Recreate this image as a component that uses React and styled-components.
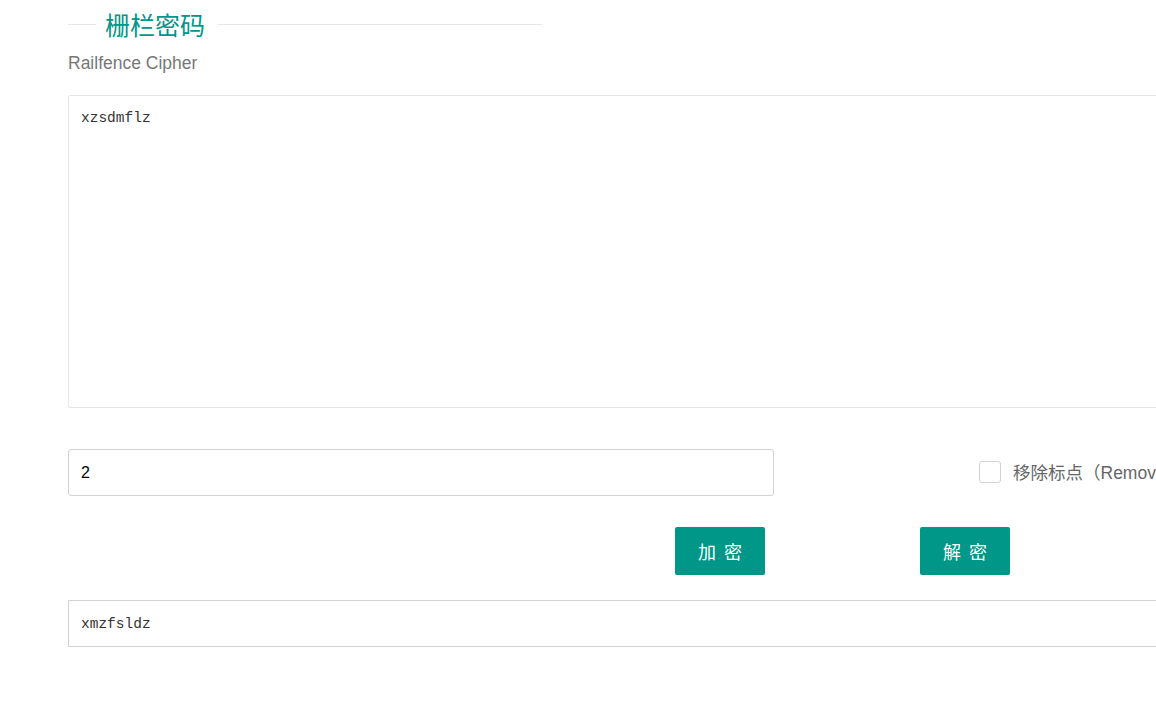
import React from "react";
import styled, { createGlobalStyle } from "styled-components";

const Global = createGlobalStyle`
  html, body { margin: 0; padding: 0; background: #fff; overflow: hidden; }
  body { font-family: "Liberation Sans", "Noto Sans CJK SC", Arial, sans-serif; color: #333; }
`;

const Page = styled.div`
  width: 1400px;
  padding: 8px 0 40px 68px;
  box-sizing: border-box;
`;

const TitleRow = styled.div`
  display: flex;
  align-items: center;
  width: 474px;
  height: 32px;
`;

const Rule = styled.div`
  height: 1px;
  background: #e6e6e6;
  flex: ${(p) => (p.$grow ? 1 : "none")};
  width: ${(p) => (p.$grow ? "auto" : `${p.$w}px`)};
`;

const Title = styled.h2`
  margin: 0;
  padding: 0 13px 0 9px;
  font-family: "Noto Sans CJK SC", "Liberation Sans", sans-serif;
  font-weight: 400;
  font-size: 25px;
  line-height: 32px;
  color: #009688;
`;

const Subtitle = styled.div`
  margin-top: 11px;
  font-size: 17.5px;
  line-height: 24px;
  color: #777;
`;

const TextArea = styled.textarea`
  display: block;
  margin-top: 20px;
  width: 1300px;
  height: 313px;
  box-sizing: border-box;
  border: 1px solid #e6e6e6;
  border-radius: 2px;
  padding: 12px 12px;
  font-family: "Liberation Mono", monospace;
  font-size: 14.5px;
  line-height: 20px;
  color: #333;
  resize: none;
  outline: none;
`;

const OptionRow = styled.div`
  display: flex;
  align-items: center;
  margin-top: 41px;
`;

const NumberInput = styled.input`
  width: 706px;
  height: 47px;
  box-sizing: border-box;
  border: 1px solid #d2d2d2;
  border-radius: 3px;
  padding: 0 12px;
  font-family: "Liberation Sans", Arial, sans-serif;
  font-size: 16px;
  color: #000;
  outline: none;
`;

const CheckLabel = styled.label`
  display: flex;
  align-items: center;
  gap: 12px;
  margin-left: 205px;
  margin-top: -2px;
  font-family: "Liberation Sans", "Noto Sans CJK SC", sans-serif;
  font-size: 17.5px;
  color: #666;
  white-space: nowrap;
`;

const Box = styled.span`
  width: 22px;
  height: 22px;
  box-sizing: border-box;
  border: 1px solid #d2d2d2;
  border-radius: 3px;
  background: #fff;
`;

const ButtonRow = styled.div`
  display: flex;
  gap: 155px;
  margin-top: 31px;
  padding-left: 607px;
`;

const Button = styled.button`
  width: 90px;
  height: 48px;
  border: none;
  border-radius: 2px;
  background: #009688;
  color: #fff;
  font-family: "Noto Sans CJK SC", sans-serif;
  font-size: 18px;
  letter-spacing: 2px;
  text-indent: 2px;
  cursor: pointer;
`;

const Output = styled.div`
  margin-top: 25px;
  width: 1300px;
  height: 47px;
  box-sizing: border-box;
  border: 1px solid #d2d2d2;
  padding: 0 12px;
  display: flex;
  align-items: center;
  font-family: "Liberation Mono", monospace;
  font-size: 14.5px;
  color: #333;
`;

export default function App() {
  return (
    <>
      <Global />
      <Page>
        <TitleRow>
          <Rule $w={28} />
          <Title>栅栏密码</Title>
          <Rule $grow />
        </TitleRow>
        <Subtitle>Railfence Cipher</Subtitle>
        <TextArea defaultValue="xzsdmflz" />
        <OptionRow>
          <NumberInput type="text" defaultValue="2" />
          <CheckLabel>
            <Box />
            移除标点（Remove punctuation）
          </CheckLabel>
        </OptionRow>
        <ButtonRow>
          <Button>加 密</Button>
          <Button>解 密</Button>
        </ButtonRow>
        <Output>xmzfsldz</Output>
      </Page>
    </>
  );
}
